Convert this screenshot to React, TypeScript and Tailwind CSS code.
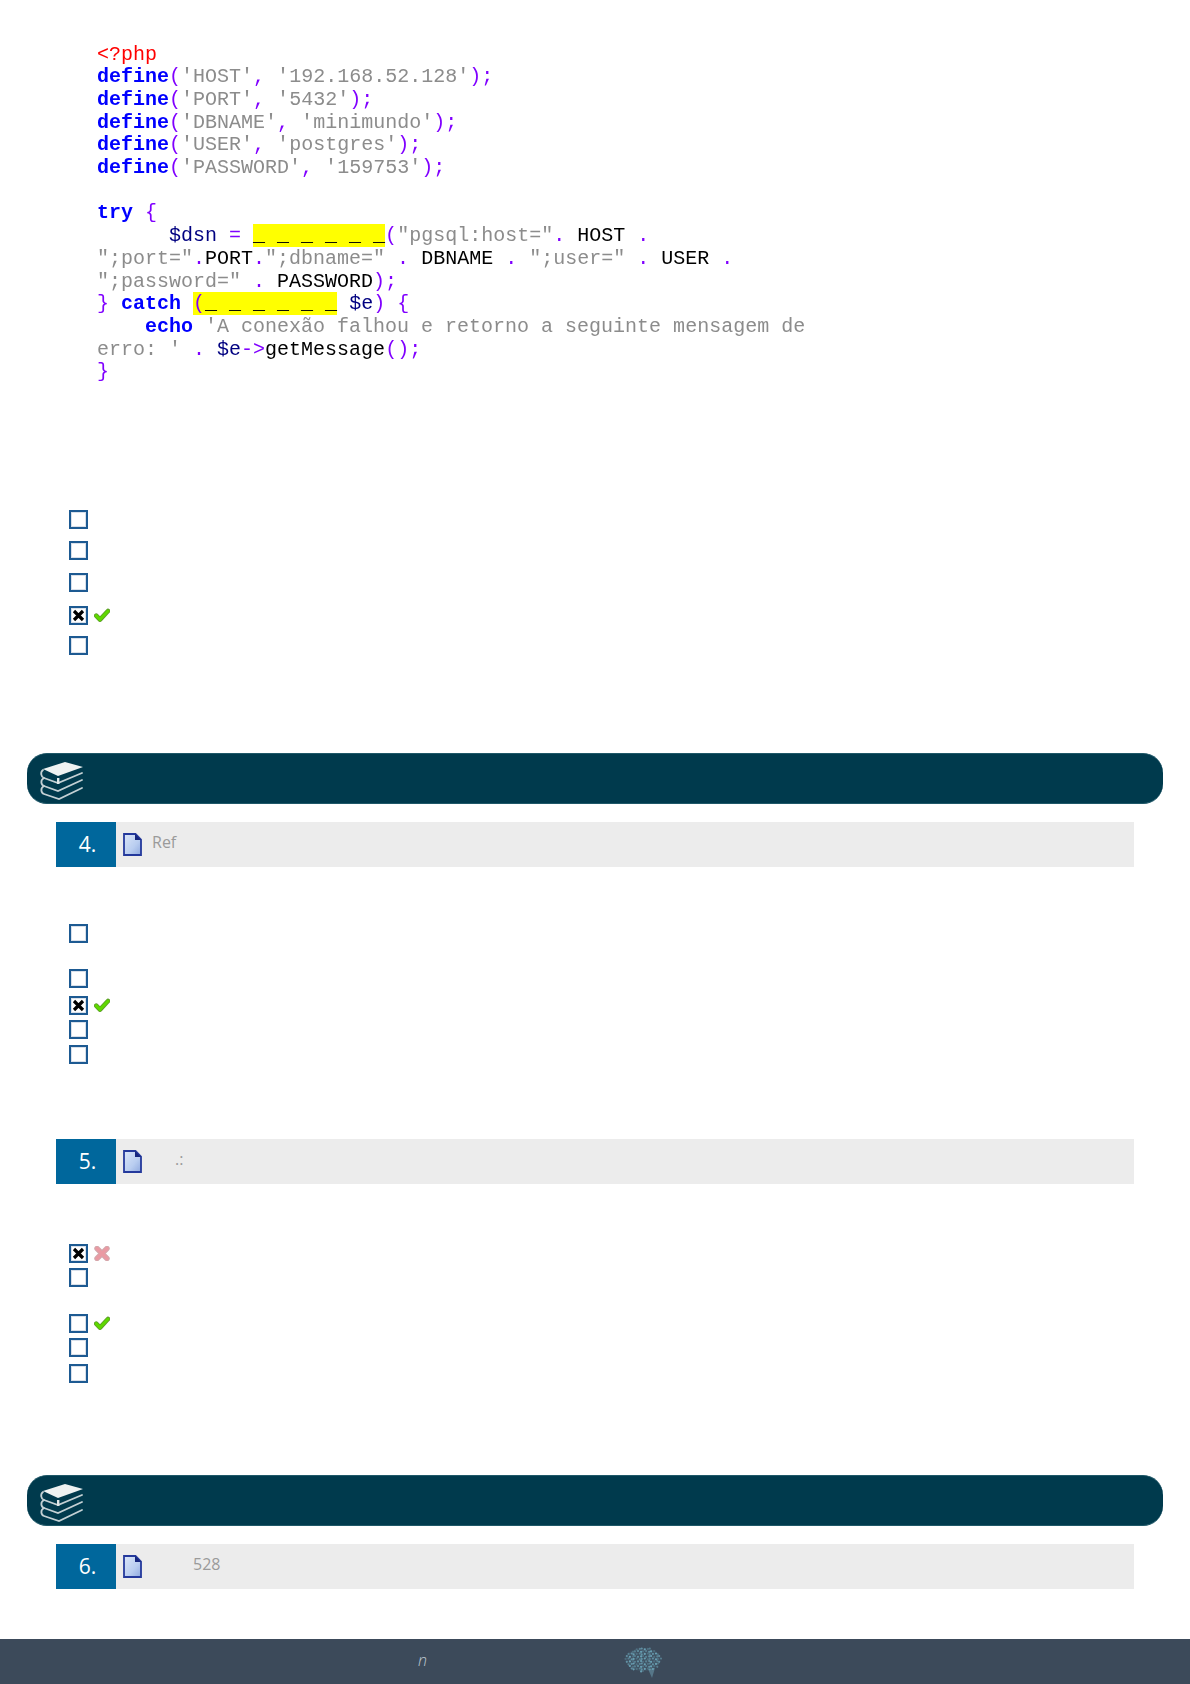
import type { ReactNode } from "react";

type Mark = "check" | "cross" | undefined;

type Option = {
  gap: string;
  marked?: boolean;
  mark?: Mark;
};

function Kw({ children }: { children: ReactNode }) {
  return <span className="font-bold text-[#0000ff]">{children}</span>;
}

function Str({ children }: { children: ReactNode }) {
  return <span className="text-[#8c8c8c]">{children}</span>;
}

function Op({ children }: { children: ReactNode }) {
  return <span className="text-[#8000ff]">{children}</span>;
}

function Var({ children }: { children: ReactNode }) {
  return <span className="text-[#000080]">{children}</span>;
}

function Define({ name, value }: { name: string; value: string }) {
  return (
    <div>
      <Kw>define</Kw>
      <Op>(</Op>
      <Str>'{name}'</Str>
      <Op>,</Op> <Str>'{value}'</Str>
      <Op>);</Op>
    </div>
  );
}

function CodeBlock() {
  return (
    <div className="h-[510px] pt-[43.5px] pl-[97px]">
      <pre className="blur-[0.45px] font-['Liberation_Mono',monospace] text-[20px] leading-[22.7px] text-black">
        <div className="text-[#ff0000]">&lt;?php</div>
        <Define name="HOST" value="192.168.52.128" />
        <Define name="PORT" value="5432" />
        <Define name="DBNAME" value="minimundo" />
        <Define name="USER" value="postgres" />
        <Define name="PASSWORD" value="159753" />
        <div>&nbsp;</div>
        <div>
          <Kw>try</Kw> <Op>{"{"}</Op>
        </div>
        <div>
          {"      "}
          <Var>$dsn</Var> <Op>=</Op> <span className="bg-[#ffff00]">_ _ _ _ _ _</span>
          <Op>(</Op>
          <Str>"pgsql:host="</Str>
          <Op>.</Op> HOST <Op>.</Op>
        </div>
        <div>
          <Str>";port="</Str>
          <Op>.</Op>PORT<Op>.</Op>
          <Str>";dbname="</Str> <Op>.</Op> DBNAME <Op>.</Op> <Str>";user="</Str> <Op>.</Op> USER <Op>.</Op>
        </div>
        <div>
          <Str>";password="</Str> <Op>.</Op> PASSWORD<Op>);</Op>
        </div>
        <div>
          <Op>{"}"}</Op> <Kw>catch</Kw>{" "}
          <span className="bg-[#ffff00]">
            <Op>(</Op>_ _ _ _ _ _
          </span>{" "}
          <Var>$e</Var>
          <Op>)</Op> <Op>{"{"}</Op>
        </div>
        <div>
          {"    "}
          <Kw>echo</Kw> <Str>'A conexão falhou e retorno a seguinte mensagem de</Str>
        </div>
        <div>
          <Str>erro: '</Str> <Op>.</Op> <Var>$e</Var>
          <Op>-&gt;</Op>getMessage<Op>();</Op>
        </div>
        <div>
          <Op>{"}"}</Op>
        </div>
      </pre>
    </div>
  );
}

function CheckMark() {
  return (
    <svg viewBox="0 0 16 15" className="h-[15px] w-[16px] blur-[0.25px]">
      <path d="M2.2 7.6 6 11.6 14 3" fill="none" stroke="#5c9a2a" strokeWidth="4.6" strokeLinecap="round" strokeLinejoin="round" />
      <path d="M2.2 7.6 6 11.6 14 3" fill="none" stroke="#5fd800" strokeWidth="3" strokeLinecap="round" strokeLinejoin="round" />
    </svg>
  );
}

function CrossMark() {
  return (
    <svg viewBox="0 0 16 15" className="h-[15px] w-[16px] blur-[0.3px]">
      <path d="M3 2.5 13 12.5M13 2.5 3 12.5" fill="none" stroke="#d3a8ac" strokeWidth="5.4" strokeLinecap="round" />
      <path d="M3 2.5 13 12.5M13 2.5 3 12.5" fill="none" stroke="#ea9aa3" strokeWidth="3.4" strokeLinecap="round" />
    </svg>
  );
}

function OptionRow({ gap, marked, mark }: Option) {
  return (
    <div className={`flex h-[19px] items-center gap-[6px] ${gap}`}>
      <span className="flex h-[19px] w-[19px] shrink-0 items-center justify-center border-2 border-[#1d5a92] bg-white shadow-[inset_0_0_0_1px_#d9e0ea]">
        {marked && (
          <svg viewBox="0 0 13 13" className="h-[13px] w-[13px] blur-[0.3px]">
            <path d="M2 2 11 11M11 2 2 11" fill="none" stroke="#000" strokeWidth="3.2" />
          </svg>
        )}
      </span>
      {mark === "check" && <CheckMark />}
      {mark === "cross" && <CrossMark />}
    </div>
  );
}

function Options({ top, items }: { top: string; items: Option[] }) {
  return (
    <div className={`pl-[69px] ${top}`}>
      {items.map((item, i) => (
        <OptionRow key={i} {...item} />
      ))}
    </div>
  );
}

function BooksIcon() {
  return (
    <svg viewBox="0 0 64 48" className="absolute left-[3px] top-[1px] h-[48px] w-[64px] blur-[0.4px]">
      <g fill="none" stroke="#c3d0d4" strokeWidth="1.8" strokeLinecap="round">
        <path d="M13 15C10 17 11 22 14 23L28 28 52 18" />
        <path d="M14 23C10 25 11 30 14 31L28 36 52 25" />
        <path d="M14 31C10 33 11 38 14 39L29 44 52 33" />
      </g>
      <path d="M13 14 35 7 53 12 28 21Z" fill="#eef2f2" />
      <rect x="27" y="23" width="2.4" height="6" fill="#dfe7e8" />
    </svg>
  );
}

function SectionBar({ top }: { top: string }) {
  return (
    <div className={`relative mx-[27px] h-[51px] rounded-[20px] border-y border-[#1f5868] bg-[#003a4d] ${top}`}>
      <BooksIcon />
    </div>
  );
}

function DocIcon() {
  return (
    <svg viewBox="0 0 19 23" className="h-[23px] w-[19px] shrink-0 blur-[0.25px]">
      <defs>
        <linearGradient id="doc" x1="0" y1="0" x2="1" y2="1">
          <stop offset="0" stopColor="#dbe6f8" />
          <stop offset="0.6" stopColor="#b9cdf0" />
          <stop offset="1" stopColor="#8fa9de" />
        </linearGradient>
      </defs>
      <path d="M1 1H12.5L18 6.5V22H1Z" fill="url(#doc)" stroke="#24399c" strokeWidth="1.8" />
      <path d="M12 1V7H18Z" fill="#16267e" />
    </svg>
  );
}

function Question({
  num,
  text,
  textGap,
  top,
}: {
  num: string;
  text: string;
  textGap: string;
  top: string;
}) {
  return (
    <div className={`mx-[56px] flex h-[45px] items-center bg-[#ececec] ${top}`}>
      <div className="flex h-full w-[60px] items-center justify-center bg-[#00679c] pl-[3px] text-[21px] text-white">
        {num}
      </div>
      <div className="ml-[7px]">
        <DocIcon />
      </div>
      <span className={`-mt-[5px] text-[16px] text-[#9a9a9a] ${textGap}`}>{text}</span>
    </div>
  );
}

// pontos do cérebro do rodapé, só decoração
function brainDots() {
  const dots: { x: number; y: number; o: number }[] = [];
  for (let r = 0; r < 10; r++) {
    for (let c = 0; c < 14; c++) {
      const x = 1.5 + c * 2.7 + (r % 2) * 1.3 + ((c * 7 + r * 3) % 3) * 0.4;
      const y = 1.5 + r * 2.5 + ((c * 5 + r) % 3) * 0.4;
      const inside = ((x - 19) / 18.5) ** 2 + ((y - 12.5) / 12) ** 2 < 1;
      if (inside) dots.push({ x, y, o: 0.3 + ((c + r * 2) % 4) * 0.17 });
    }
  }
  return dots;
}

function BrainIcon() {
  return (
    <svg viewBox="0 0 38 31" className="h-[31px] w-[38px] blur-[0.5px]">
      <path d="M24 22 28 31 31 21Z" fill="#6c9bae" opacity="0.55" />
      <ellipse cx="19" cy="12.5" rx="17.5" ry="11.5" fill="#5f8ea3" opacity="0.15" />
      {brainDots().map((d, i) => (
        <circle key={i} cx={d.x} cy={d.y} r="1.1" fill="#73b2c6" opacity={d.o} />
      ))}
    </svg>
  );
}

function Footer() {
  return (
    <div className="mt-[50px] flex h-[45px] items-center bg-[#3c4a5a]">
      <span className="ml-[418px] -mt-[3px] text-[16px] font-light italic text-[#b9c3cc]">n</span>
      <div className="ml-[197px] mt-[1px]">
        <BrainIcon />
      </div>
    </div>
  );
}

export default function App() {
  return (
    <div className="w-[1190px] bg-white font-['Open_Sans',sans-serif]">
      <CodeBlock />

      <Options
        top=""
        items={[
          { gap: "" },
          { gap: "mt-[12px]" },
          { gap: "mt-[13px]" },
          { gap: "mt-[14px]", marked: true, mark: "check" },
          { gap: "mt-[11px]" },
        ]}
      />

      <SectionBar top="mt-[98px]" />
      <Question num="4." text="Ref" textGap="ml-[10px]" top="mt-[18px]" />

      <Options
        top="mt-[57px]"
        items={[
          { gap: "" },
          { gap: "mt-[26px]" },
          { gap: "mt-[8px]", marked: true, mark: "check" },
          { gap: "mt-[5px]" },
          { gap: "mt-[6px]" },
        ]}
      />

      <Question num="5." text=".:" textGap="ml-[33px]" top="mt-[75px]" />

      <Options
        top="mt-[60px]"
        items={[
          { gap: "", marked: true, mark: "cross" },
          { gap: "mt-[5px]" },
          { gap: "mt-[27px]", mark: "check" },
          { gap: "mt-[5px]" },
          { gap: "mt-[7px]" },
        ]}
      />

      <SectionBar top="mt-[92px]" />
      <Question num="6." text="528" textGap="ml-[51px]" top="mt-[18px]" />

      <Footer />
    </div>
  );
}
